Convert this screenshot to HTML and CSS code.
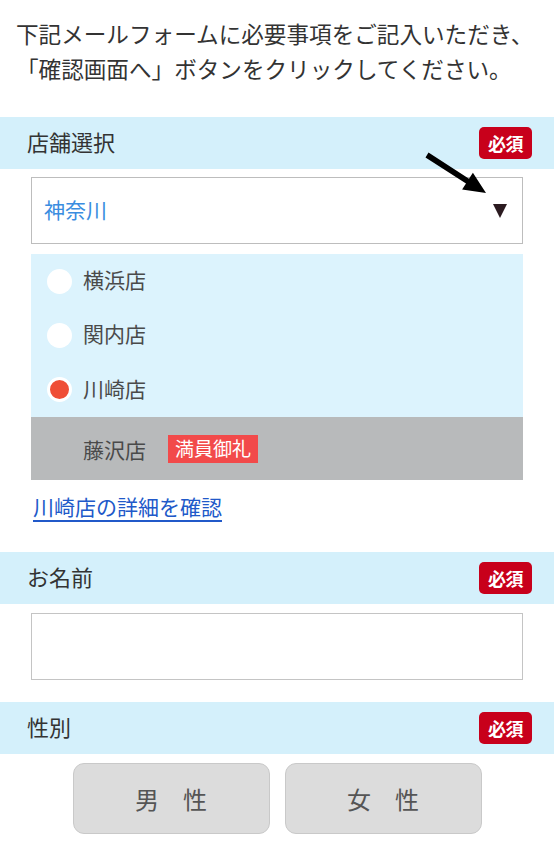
FILE: index.html
```html
<!DOCTYPE html>
<html lang="ja">
<head>
<meta charset="utf-8">
<title>フォーム</title>
<link rel="stylesheet" href="styles.css">
</head>
<body>
<main class="form">
  <p class="intro">下記メールフォームに必要事項をご記入いただき、<br>「確認画面へ」ボタンをクリックしてください。</p>

  <section class="field">
    <div class="field-head"><span class="label">店舗選択</span><span class="req">必須</span></div>
    <div class="field-body">
      <div class="select"><span class="select-value">神奈川</span><span class="caret"></span></div>
      <ul class="shops">
        <li class="shop"><span class="radio"></span><span class="shop-name">横浜店</span></li>
        <li class="shop"><span class="radio"></span><span class="shop-name">関内店</span></li>
        <li class="shop shop-last"><span class="radio radio-on"></span><span class="shop-name">川崎店</span></li>
        <li class="shop shop-full"><span class="shop-name">藤沢店</span><span class="full-badge">満員御礼</span></li>
      </ul>
      <a class="detail-link" href="#">川崎店の詳細を確認</a>
    </div>
  </section>

  <section class="field field-name">
    <div class="field-head"><span class="label">お名前</span><span class="req">必須</span></div>
    <div class="field-body">
      <div class="text-input"></div>
    </div>
  </section>

  <section class="field field-gender">
    <div class="field-head"><span class="label">性別</span><span class="req">必須</span></div>
    <div class="field-body">
      <div class="gender-buttons">
        <button class="gender-btn" type="button">男　性</button>
        <button class="gender-btn" type="button">女　性</button>
      </div>
    </div>
  </section>

  <svg class="pointer" width="72" height="50" viewBox="0 0 72 50" aria-hidden="true">
    <polygon points="8.5,4.6 49,30.7 52.9,24.7 66,45 42.1,41.5 46,35.5 5.5,9.4" fill="#000"/>
  </svg>
</main>
</body>
</html>
```

FILE: styles.css
```css
* {
  box-sizing: border-box;
}

html, body {
  margin: 0;
  padding: 0;
  background: #fff;
}

body {
  font-family: "Noto Sans CJK JP", "Noto Sans", sans-serif;
  color: #333;
}

.form {
  position: relative;
  width: 554px;
  padding-bottom: 20px;
}

.intro {
  margin: 0;
  padding: 16px 0 0 16px;
  font-size: 22.6px;
  line-height: 35px;
  color: #333;
  white-space: nowrap;
}

.field {
  margin-top: 31px;
}

.field-name {
  margin-top: 31px;
}

.field-gender {
  margin-top: 22px;
}

.field-head {
  height: 52px;
  background: #d4f0fb;
  display: flex;
  align-items: center;
  justify-content: space-between;
  padding: 0 22px 0 27px;
}

.label {
  font-size: 22px;
  color: #333;
  padding-bottom: 4px;
}

.req {
  width: 53px;
  height: 32px;
  border-radius: 5px;
  background: #c8001b;
  color: #fff;
  font-weight: bold;
  font-size: 18px;
  display: flex;
  align-items: center;
  justify-content: center;
  letter-spacing: -0.5px;
}

.field-body {
  padding: 0 31px;
}

.select {
  margin-top: 8px;
  height: 67px;
  border: 1px solid #bdbdbd;
  display: flex;
  align-items: center;
  justify-content: space-between;
  padding: 0 15px 0 12px;
}

.select-value {
  font-size: 21px;
  color: #3a8de0;
  padding-bottom: 4px;
}

.caret {
  width: 0;
  height: 0;
  border-left: 7px solid transparent;
  border-right: 7px solid transparent;
  border-top: 14px solid #2b1b20;
}

.shops {
  list-style: none;
  margin: 10px 0 0;
  padding: 0;
  background: #dcf3fd;
}

.shop {
  height: 54px;
  display: flex;
  align-items: center;
  padding-left: 16px;
  gap: 11px;
}

.shop-last {
  height: 55px;
}

.radio {
  width: 25px;
  height: 25px;
  border-radius: 50%;
  background: #fff;
  flex: none;
}

.radio-on {
  border: 3px solid #fff;
  background: #ef4e36;
}

.shop-name {
  font-size: 21px;
  color: #4a4a4a;
  padding-bottom: 4px;
}

.shop-full {
  height: 63px;
  background: #b8babb;
  padding-left: 52px;
  gap: 22px;
}

.shop-full .shop-name {
  padding-bottom: 0;
}

.full-badge {
  background: #f24a4a;
  color: #fff;
  font-size: 19px;
  height: 28px;
  padding: 0 7px 2px;
  display: flex;
  align-items: center;
}

.detail-link {
  display: inline-block;
  margin-top: 11px;
  margin-left: 2px;
  font-size: 21px;
  line-height: 30px;
  color: #2159c9;
  text-decoration: underline;
  text-decoration-thickness: 2px;
  text-underline-offset: 5px;
}

.text-input {
  margin-top: 9px;
  height: 67px;
  border: 1px solid #c4c4c4;
  background: #fff;
}

.gender-buttons {
  margin-top: 9px;
  display: flex;
  justify-content: center;
  gap: 15px;
}

.gender-btn {
  width: 197px;
  height: 71px;
  border: 1px solid #c9c9c9;
  border-radius: 11px;
  background: #dcdcdc;
  font-family: "Noto Sans CJK JP", "Noto Sans", sans-serif;
  font-size: 24px;
  color: #555;
  padding: 0;
}

.pointer {
  position: absolute;
  left: 420px;
  top: 148px;
}
```
